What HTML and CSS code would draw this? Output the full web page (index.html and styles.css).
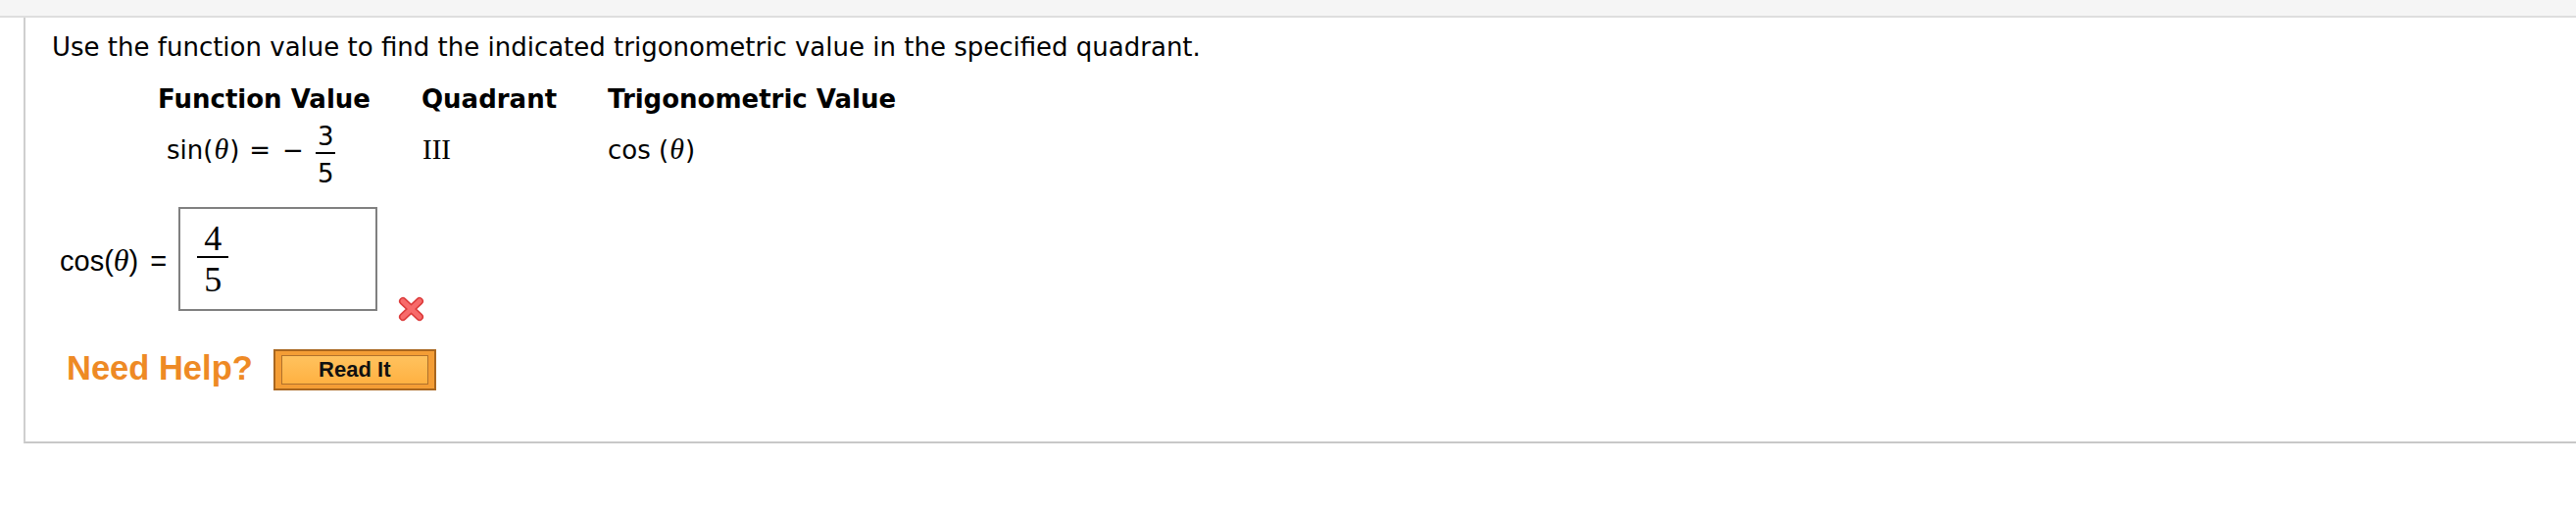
FILE: index.html
```html
<!DOCTYPE html>
<html>
<head>
<meta charset="utf-8">
<link rel="stylesheet" href="styles.css">
</head>
<body>
<div class="topbar"></div>
<div class="question">
  <p class="prompt">Use the function value to find the indicated trigonometric value in the specified quadrant.</p>
  <div class="table">
    <div class="th">Function Value</div>
    <div class="th">Quadrant</div>
    <div class="th">Trigonometric Value</div>
    <div class="td fv">sin(<i class="theta">θ</i>)<span class="op">=</span><span class="op minus">−</span><span class="frac"><span class="num">3</span><span class="den">5</span></span></div>
    <div class="td roman">III</div>
    <div class="td tv">cos (<i class="theta">θ</i>)</div>
  </div>
  <div class="answer">
    <span class="ans-label">cos(<i class="theta2">θ</i>) <span class="eq2">=</span></span>
    <div class="ans-box"><span class="frac tex"><span class="num">4</span><span class="den">5</span></span></div>
    <svg class="wrong" width="27" height="26" viewBox="0 0 27 26">
      <path d="M5 5L22 21M22 5L5 21" stroke="#dc3b3b" stroke-width="8" stroke-linecap="round" fill="none"/>
      <path d="M5 5L22 21M22 5L5 21" stroke="#f76a6a" stroke-width="5" stroke-linecap="round" fill="none"/>
    </svg>
  </div>
  <div class="help">
    <span class="need">Need Help?</span>
    <div class="btn"><div class="btn-inner">Read It</div></div>
  </div>
</div>
</body>
</html>
```
FILE: styles.css
```css
html, body {
  margin: 0;
  padding: 0;
  background: #ffffff;
}
body {
  font-family: "DejaVu Sans", Verdana, sans-serif;
  color: #000000;
}
.topbar {
  height: 16px;
  background: #f5f5f5;
  border-bottom: 2px solid #dedede;
}
.question {
  margin-left: 24px;
  border-left: 2px solid #cfcfcf;
  border-bottom: 2px solid #c8c8c8;
  padding: 14px 0 52px 27px;
}
.prompt {
  margin: 0;
  font-size: 26px;
  line-height: 32px;
}
.table {
  display: grid;
  grid-template-columns: 269px 190px auto;
  align-items: baseline;
  margin: 22px 0 0 108px;
}
.th {
  font-weight: bold;
  font-size: 26px;
  line-height: 30px;
}
.td {
  font-size: 26px;
  line-height: 30px;
  margin-top: 10px;
}
.fv {
  padding-left: 9px;
}
.theta {
  font-family: "Liberation Serif", "DejaVu Serif", serif;
  font-size: 30px;
  padding: 0 1px;
}
.op {
  margin-left: 10px;
}
.minus {
  margin-left: 12px;
  margin-right: 12px;
}
.frac {
  display: inline-block;
  vertical-align: -24px;
  text-align: center;
}
.frac .num {
  display: block;
  line-height: 26px;
  padding: 0 2px 3px;
  border-bottom: 2px solid #000;
}
.frac .den {
  display: block;
  line-height: 26px;
  padding-top: 7px;
}
.roman {
  font-family: "Liberation Serif", serif;
  font-size: 29px;
  padding-left: 1px;
}
.answer {
  display: flex;
  align-items: center;
  margin: 21px 0 0 8px;
}
.ans-label {
  font-family: "Liberation Sans", Arial, sans-serif;
  font-size: 29px;
  line-height: 36px;
  padding-top: 3px;
}
.theta2 {
  font-family: "Liberation Serif", serif;
  font-size: 32px;
}
.eq2 {
  margin-left: 4px;
}
.ans-box {
  box-sizing: border-box;
  width: 203px;
  height: 106px;
  margin-left: 12px;
  border: 2px solid #808080;
  padding-left: 17px;
  display: flex;
  align-items: center;
}
.frac.tex {
  vertical-align: baseline;
  font-family: "Liberation Serif", serif;
  font-size: 36px;
}
.frac.tex .num {
  line-height: 32px;
  padding: 0 7px 2px;
}
.frac.tex .den {
  line-height: 32px;
  padding-top: 6px;
}
.wrong {
  align-self: flex-end;
  margin: 0 0 -11px 21px;
}
.help {
  display: flex;
  align-items: center;
  margin: 38px 0 0 15px;
}
.need {
  font-family: "Liberation Sans", Arial, sans-serif;
  font-weight: bold;
  font-size: 34.5px;
  line-height: 40px;
  color: #ee8a25;
  margin-bottom: 3px;
}
.btn {
  box-sizing: border-box;
  width: 166px;
  height: 42px;
  margin-left: 21px;
  border: 2px solid #a8661f;
  background: #f49d35;
  padding: 4px 6px;
}
.btn-inner {
  box-sizing: border-box;
  height: 100%;
  border: 1px solid #b0712c;
  background: linear-gradient(#ffc25e, #ffb142);
  font-family: "Liberation Sans", Arial, sans-serif;
  font-weight: bold;
  font-size: 22px;
  line-height: 28px;
  text-align: center;
  color: #111;
}
```
